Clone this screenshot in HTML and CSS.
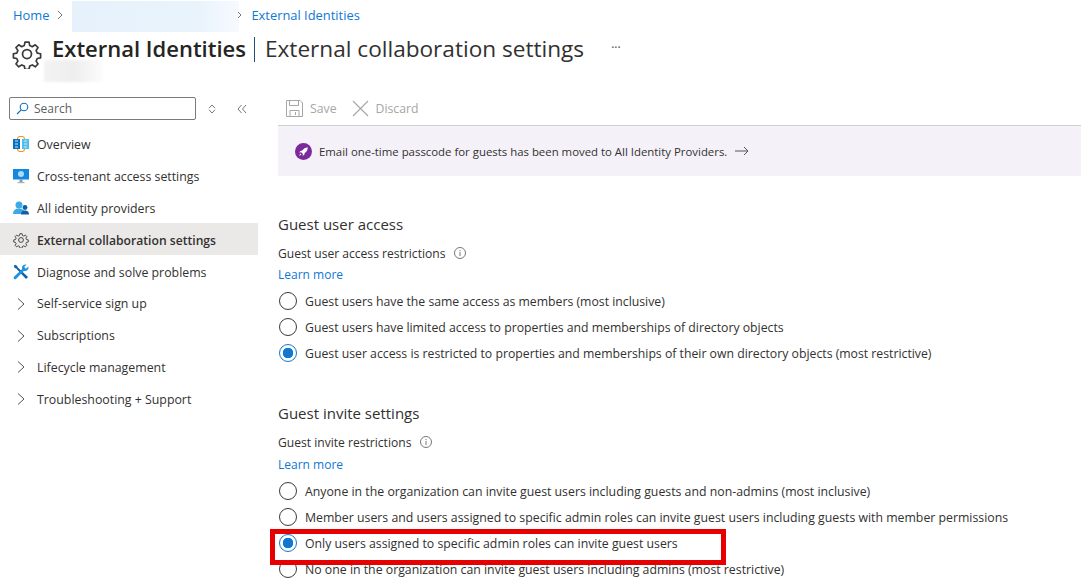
FILE: index.html
```html
<!DOCTYPE html>
<html>
<head>
<title>External collaboration settings</title>
<meta name="viewport" content="width=device-width, initial-scale=1">
<link rel="stylesheet" href="styles.css">
</head>
<body>
<div class="page">
  <span class="smudge smudge-crumb"></span>
  <nav class="crumbs">
    <a>Home</a>
    <svg class="crumb-sep" width="8" height="10" viewBox="0 0 8 10"><path d="M2 1l4 4-4 4" fill="none" stroke="#777" stroke-width="1"/></svg>
    <span class="crumb-gap"></span>
    <svg class="crumb-sep" width="8" height="10" viewBox="0 0 8 10"><path d="M2 2l3 3-3 3" fill="none" stroke="#777" stroke-width="1"/></svg>
    <a class="crumb-last">External Identities</a>
  </nav>

  <header class="title-row">
    <svg class="title-gear" width="30" height="30" viewBox="0 0 24 24"><use href="#gear"/></svg>
    <h1><b>External Identities</b><i></i><span>External collaboration settings</span></h1>
    <span class="title-more">&middot;&middot;&middot;</span>
  </header>
  <span class="smudge smudge-sub"></span>

  <div class="layout">
    <aside class="side">
      <div class="side-top">
        <div class="search">
          <svg width="13" height="13" viewBox="0 0 13 13"><circle cx="8" cy="5" r="3.8" fill="none" stroke="#0f6cbd" stroke-width="1.1"/><path d="M5.2 7.8L1 12" stroke="#0f6cbd" stroke-width="1.2"/></svg>
          <span>Search</span>
        </div>
        <svg class="sort" width="8" height="10" viewBox="0 0 8 10"><path d="M4 1l3 3.2M4 1L1 4.2M4 9L1 5.8M4 9l3-3.2" stroke="#777" fill="none"/></svg>
        <svg class="collapse" width="10" height="10" viewBox="0 0 10 10"><path d="M4.5 1L1 5l3.5 4M9 1L5.500 5 9 9" stroke="#777" fill="none"/></svg>
      </div>
      <ul class="menu">
        <li>
          <svg width="16" height="16" viewBox="0 0 16 16"><rect x="4.500" y=".5" width="7" height="15" rx="2.500" fill="none" stroke="#f7941d" stroke-width="1.100"/><rect x="0" y="3" width="7" height="10" fill="#0a6ebd"/><rect x="9" y="3" width="7" height="10" fill="#50c0ea"/><path d="M2 5h3M2 8h3M2 11h3M11 5h3M11 8h3M11 11h3" stroke="#cdeafa"/></svg>
          Overview
        </li>
        <li>
          <svg width="16" height="16" viewBox="0 0 16 16"><rect x="0" y="1" width="16" height="10.500" fill="#1488dc"/><circle cx="8" cy="6" r="3" fill="#a9dcf7"/><rect x="6.500" y="11.500" width="3" height="3" fill="#8b9aa5"/><rect x="4.500" y="14" width="7" height="1.200" fill="#a9b4bc"/></svg>
          Cross-tenant access settings
        </li>
        <li>
          <svg width="16" height="16" viewBox="0 0 16 16"><circle cx="6" cy="5" r="3.500" fill="#3fa9e6"/><path d="M0 14q0-5.500 6-5.500T12 14z" fill="#3fa9e6"/><circle cx="12" cy="7.500" r="2.400" fill="#0f5fa8"/><path d="M8 14.500q0-4 4-4t4 4z" fill="#0f5fa8"/></svg>
          All identity providers
        </li>
        <li class="active">
          <svg width="16" height="16" viewBox="0 0 24 24"><use href="#gear"/></svg>
          External collaboration settings
        </li>
        <li>
          <svg width="16" height="16" viewBox="0 0 16 16"><path d="M2 .8L.8 2l1 2 1.500.6L13 15l2-2L4.600 3.300 4 1.800z" fill="#0f5fa8"/><path d="M15.500 2.500l-2.600 2.300-1.700-1.700L13.500.5Q10.500 0 9.300 2.200q-.6 1.300-.1 2.700L1 12.700q-.8 1 0 2t2 .3l8-8.200q1.500.5 2.800-.2 2.200-1.200 1.700-4.100z" fill="#1b93e0"/></svg>
          Diagnose and solve problems
        </li>
        <li class="group"><svg width="16" height="16" viewBox="0 0 16 16"><path d="M5 2.500l6 5.500-6 5.500" fill="none" stroke="#555"/></svg>Self-service sign up</li>
        <li class="group"><svg width="16" height="16" viewBox="0 0 16 16"><path d="M5 2.500l6 5.500-6 5.500" fill="none" stroke="#555"/></svg>Subscriptions</li>
        <li class="group"><svg width="16" height="16" viewBox="0 0 16 16"><path d="M5 2.500l6 5.500-6 5.500" fill="none" stroke="#555"/></svg>Lifecycle management</li>
        <li class="group"><svg width="16" height="16" viewBox="0 0 16 16"><path d="M5 2.500l6 5.500-6 5.500" fill="none" stroke="#555"/></svg>Troubleshooting + Support</li>
      </ul>
    </aside>

    <main class="content">
      <div class="toolbar">
        <span class="tool">
          <svg width="17" height="17" viewBox="0 0 17 17"><path d="M.5.5h13.500l2.500 2.500v13.500H.5z M3.500.5v5h9v-5 M4 16.500v-6h9v6 M9.500 12v3" fill="none" stroke="#a6a6a6"/></svg>
          Save
        </span>
        <span class="tool">
          <svg width="17" height="17" viewBox="0 0 17 17"><path d="M1 1l15 15M16 1L1 16" stroke="#a6a6a6" stroke-width="1.100"/></svg>
          Discard
        </span>
      </div>

      <div class="banner">
        <svg width="17" height="17" viewBox="0 0 17 17"><circle cx="8.500" cy="8.500" r="8.500" fill="#7b2a9c"/><path d="M12.800 4.200q-3.800.3-5.600 3.300l-1.800.4-1.200 1.600 2-.2 1.700 1.700-.2 2 1.600-1.200.4-1.800q3-1.800 3.100-5.800zM5.200 10.500l-1 2.300 2.300-1z" fill="#fff"/></svg>
        <span>Email one-time passcode for guests has been moved to All Identity Providers.</span>
        <svg class="banner-arrow" width="14" height="10" viewBox="0 0 14 10"><path d="M0 5h13M9 1l4 4-4 4" fill="none" stroke="#555"/></svg>
      </div>

      <section class="block block-access">
        <h2>Guest user access</h2>
        <div class="field-label">Guest user access restrictions
          <svg width="12" height="12" viewBox="0 0 12 12"><circle cx="6" cy="6" r="5.500" fill="none" stroke="#777"/><path d="M6 5v4M6 3v1.200" stroke="#777"/></svg>
        </div>
        <a class="learn">Learn more</a>
        <div class="radios">
          <div class="radio"><span class="dot"></span>Guest users have the same access as members (most inclusive)</div>
          <div class="radio"><span class="dot"></span>Guest users have limited access to properties and memberships of directory objects</div>
          <div class="radio"><span class="dot on"></span>Guest user access is restricted to properties and memberships of their own directory objects (most restrictive)</div>
        </div>
      </section>

      <section class="block block-invite">
        <h2>Guest invite settings</h2>
        <div class="field-label">Guest invite restrictions
          <svg width="12" height="12" viewBox="0 0 12 12"><circle cx="6" cy="6" r="5.500" fill="none" stroke="#777"/><path d="M6 5v4M6 3v1.200" stroke="#777"/></svg>
        </div>
        <a class="learn">Learn more</a>
        <div class="radios">
          <div class="radio"><span class="dot"></span>Anyone in the organization can invite guest users including guests and non-admins (most inclusive)</div>
          <div class="radio"><span class="dot"></span>Member users and users assigned to specific admin roles can invite guest users including guests with member permissions</div>
          <div class="radio"><span class="dot on"></span>Only users assigned to specific admin roles can invite guest users</div>
          <div class="radio"><span class="dot"></span>No one in the organization can invite guest users including admins (most restrictive)</div>
        </div>
      </section>
    </main>
  </div>
  <div class="highlight"></div>
</div>

<svg width="0" height="0" class="defs">
  <symbol id="gear" viewBox="0 0 24 24">
    <path d="M10.200 1.500h3.600l.6 3 2.300 1 2.600-1.700 2.500 2.500-1.700 2.600 1 2.300 3 .6v3.600l-3 .6-1 2.300 1.700 2.600-2.500 2.500-2.600-1.700-2.300 1-.6 3h-3.600l-.6-3-2.300-1-2.600 1.700-2.500-2.500 1.700-2.600-1-2.300-3-.6v-3.600l3-.6 1-2.300-1.700-2.600 2.500-2.500 2.600 1.700 2.300-1z" transform="translate(1.200 1.200) scale(.9)" fill="none" stroke="#3b3a39" stroke-width="1.500" stroke-linejoin="round"/>
    <circle cx="12" cy="12" r="3.600" fill="none" stroke="#3b3a39" stroke-width="1.400"/>
  </symbol>
</svg>
</body>
</html>
```

FILE: styles.css
```css
* { box-sizing: border-box; }

html, body {
  margin: 0;
  height: 588px;
  overflow: hidden;
  background: #fff;
}

body {
  font-family: "Open Sans", "Noto Sans", sans-serif;
  font-size: 12px;
  color: #323130;
}

.page {
  position: relative;
  height: 588px;
  overflow: hidden;
}

.defs { position: absolute; }

a { color: #0f78d4; }

/* header */
.crumbs {
  position: relative;
  display: flex;
  align-items: center;
  height: 30px;
  padding-left: 13px;
  font-size: 12.9px;
}
.crumb-sep { margin: 0 3px 0 7px; }
.crumb-gap { width: 162px; }
.crumb-last { margin-left: 4px; }

.smudge { position: absolute; }
.smudge-crumb {
  left: 72px;
  top: 1px;
  width: 167px;
  height: 31px;
  background: linear-gradient(90deg, #e6f1fb, #e9f3fc 75%, #f6fafe);
}
.smudge-sub {
  left: 44px;
  top: 60px;
  width: 59px;
  height: 22px;
  filter: blur(1px);
  background: linear-gradient(90deg, #f3f3f3, #eeeeee 50%, #fcfcfc);
}

.title-row {
  display: flex;
  align-items: center;
  height: 36px;
  padding-left: 12px;
}
.title-gear { margin-top: 11px; flex: none; }
h1 {
  display: flex;
  align-items: center;
  margin: 0 0 0 10px;
  font-size: 22.6px;
  font-weight: 400;
  white-space: nowrap;
  color: #323130;
}
h1 b {
  font-size: 22px;
  font-weight: 600;
  color: #252423;
}
h1 i {
  width: 1px;
  height: 25px;
  margin: 2px 10px 0 8px;
  background: #1f4f7f;
}
.title-more {
  margin: -2px 0 0 27px;
  font-size: 12px;
  color: #444;
}

/* sidebar */
.layout {
  display: flex;
  margin-top: 31px;
}
.side {
  width: 258px;
  flex: none;
}
.side-top {
  display: flex;
  align-items: center;
  padding-left: 9px;
}
.search {
  display: flex;
  align-items: center;
  gap: 5px;
  width: 187px;
  height: 23px;
  padding-left: 6px;
  border: 1px solid #7a7a7a;
  border-radius: 2px;
  color: #605e5c;
}
.sort { margin-left: 12px; }
.collapse { margin-left: 21px; }

.menu {
  list-style: none;
  margin: 7px 0 0;
  padding: 0;
  font-size: 12.35px;
}
.menu li {
  display: flex;
  align-items: center;
  gap: 8px;
  height: 32px;
  padding: 2px 0 0 13px;
  white-space: nowrap;
}
.menu li.active {
  background: #ebe9e7;
  font-size: 12.15px;
  font-weight: 600;
}
.menu li.group { height: 31.750px; }

/* main */
.content {
  flex: 1;
  margin-left: 20px;
  min-width: 0;
}
.toolbar {
  display: flex;
  align-items: center;
  gap: 15px;
  height: 29px;
  padding: 0 0 5px 8px;
  border-bottom: 1px solid #d1d1d1;
  color: #a6a6a6;
  font-size: 12.25px;
}
.tool {
  display: flex;
  align-items: center;
  gap: 7px;
}
.banner {
  display: flex;
  align-items: center;
  height: 50px;
  padding-left: 17px;
  gap: 7px;
  background: #f5f1f9;
  font-size: 11.4px;
  white-space: nowrap;
}
.banner-arrow { margin-left: 1px; }

.block h2 {
  margin: 0;
  font-size: 15px;
  font-weight: 400;
  line-height: 20px;
}
.block-access { margin-top: 38px; }
.block-invite { margin-top: 37px; }

.field-label {
  display: flex;
  align-items: center;
  gap: 9px;
  height: 18px;
  margin-top: 10px;
  font-size: 12.1px;
}
.learn {
  display: block;
  height: 18px;
  line-height: 18px;
  margin-top: 4px;
}
.block-invite .learn { margin-top: 5px; }
.radios { margin-top: 4px; }
.radio {
  display: flex;
  align-items: center;
  gap: 8px;
  height: 26px;
  font-size: 12.3px;
  white-space: nowrap;
}
.block-access .radio { font-size: 12.25px; }
.dot {
  width: 18px;
  height: 18px;
  flex: none;
  margin-left: 1px;
  border: 1.500px solid #3b3a39;
  border-radius: 50%;
}
.dot.on {
  border-color: #0f78d4;
  background: radial-gradient(circle, #0f78d4 0 5px, #fff 5.500px);
}

/* annotation on top of the screenshot */
.highlight {
  position: absolute;
  left: 270px;
  top: 529px;
  width: 456px;
  height: 36px;
  border: 5px solid #e60000;
}
```
